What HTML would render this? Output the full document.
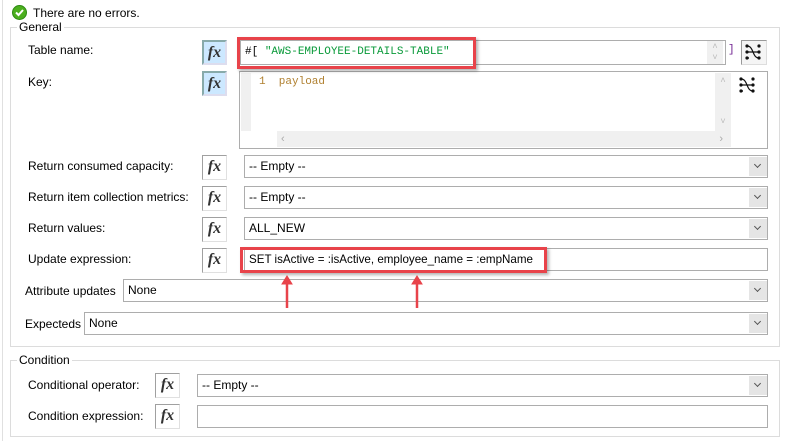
<!DOCTYPE html>
<html><head><style>
*{box-sizing:border-box;margin:0;padding:0}
body{width:785px;height:441px;background:#fff;font-family:"Liberation Sans",sans-serif;font-size:12px;color:#000;position:relative;overflow:hidden}
.a{position:absolute}
.lbl{position:absolute;font-size:12px;line-height:14px}
.fx{position:absolute;width:25px;height:25px;border:1px solid #a0a0a0;border-right-color:#e0e0e0;border-bottom-color:#e0e0e0;background:#fff;font-family:"Liberation Serif",serif;font-style:italic;font-weight:bold;font-size:16px;text-align:center;line-height:22px;color:#333}
.fx.b{background:#cce8ff;border:2px solid #8aa;border-right-color:#dde;border-bottom-color:#dde}
.sel{position:absolute;height:23px;border:1px solid #adadad;background:#fff;font-size:12px;line-height:21px;padding-left:4px}
.sel .arr{position:absolute;right:0;top:1px;width:18px;height:19px;background:#e5e5e5}
.sel .arr:after{content:"";position:absolute;left:6px;top:5px;width:4px;height:4px;border-right:1px solid #555;border-bottom:1px solid #555;transform:rotate(45deg)}
.fs{position:absolute;border:1px solid #dcdcdc}
.leg{position:absolute;background:#fff;padding:0 2px;font-size:12px;line-height:14px}
.red{position:absolute;border:3px solid #e8434a;box-shadow:2px 2px 3px rgba(0,0,0,.3);z-index:5}
.mono{font-family:"Liberation Mono",monospace;font-size:11px}
</style></head><body>
<div class="a" style="left:2px;top:0;width:1px;height:441px;background:#e0e0e0"></div>
<svg class="a" style="left:12px;top:5px" width="15" height="15"><circle cx="7.5" cy="7.5" r="7" fill="#4caf1e" stroke="#2d8a12"/><path d="M4 7.5l2.5 2.5 4.5-5" stroke="#fff" stroke-width="2" fill="none"/></svg>
<div class="lbl" style="left:33px;top:6px">There are no errors.</div>

<div class="fs" style="left:10px;top:27px;width:770px;height:320px"></div>
<div class="leg" style="left:17px;top:20px">General</div>

<div class="lbl" style="left:28px;top:43px">Table name:</div>
<div class="fx b" style="left:202px;top:40px">fx</div>
<div class="a" style="left:240px;top:40px;width:486px;height:25px;border:1px solid #adadad"></div>
<div class="a" style="left:707px;top:41px;width:16px;height:23px;background:#f0f0f0;color:#bbb;font-size:9px;text-align:center;line-height:11px">˄<br>˅</div>
<div class="a mono" style="left:245px;top:45px;line-height:14px"><span style="color:#000">#[</span> <span style="color:#0a9a3a">"AWS-EMPLOYEE-DETAILS-TABLE"</span></div>
<div class="a mono" style="left:728px;top:44px;color:#702090">]</div>
<div class="red" style="left:237px;top:37px;width:239px;height:32px"></div>
<div class="a" style="left:741px;top:40px;width:26px;height:25px;border:1px solid #999;border-right-color:#ddd;border-bottom-color:#ddd;background:#f5f5f5"></div>
<svg class="a" style="left:744px;top:43px" width="20" height="20"><g fill="#111"><circle cx="3" cy="3" r="1.6"/><circle cx="3" cy="9" r="1.6"/><circle cx="3" cy="15" r="1.6"/><circle cx="15" cy="3" r="1.6"/><circle cx="15" cy="9" r="1.6"/><circle cx="15" cy="15" r="1.6"/></g><path d="M3 3C10 3 8 15 15 15M3 15h2M3 9h12" stroke="#111" stroke-width="1.2" fill="none"/></svg>

<div class="lbl" style="left:28px;top:75px">Key:</div>
<div class="fx b" style="left:202px;top:71px">fx</div>
<div class="a" style="left:239px;top:71px;width:529px;height:78px;border:1px solid #adadad"></div>
<div class="a" style="left:241px;top:73px;width:10px;height:58px;background:#f0f0f0"></div>
<div class="a mono" style="left:259px;top:76px;color:#b08030">1&nbsp;&nbsp;payload</div>
<div class="a" style="left:715px;top:73px;width:16px;height:58px;background:#f0f0f0;color:#bbb;font-size:9px;text-align:center"><div style="margin-top:2px">˄</div><div style="margin-top:31px">˅</div></div>
<div class="a" style="left:277px;top:131px;width:454px;height:16px;background:#f0f0f0;color:#aaa;font-size:11px;line-height:16px;padding-left:4px">‹<span style="position:absolute;right:8px">›</span></div>
<svg class="a" style="left:738px;top:76px" width="20" height="20"><g fill="#111"><circle cx="3" cy="3" r="1.6"/><circle cx="3" cy="9" r="1.6"/><circle cx="3" cy="15" r="1.6"/><circle cx="15" cy="3" r="1.6"/><circle cx="15" cy="9" r="1.6"/><circle cx="15" cy="15" r="1.6"/></g><path d="M3 3C10 3 8 15 15 15M3 15h2M3 9h12" stroke="#111" stroke-width="1.2" fill="none"/></svg>

<div class="lbl" style="left:28px;top:159px">Return consumed capacity:</div>
<div class="fx" style="left:202px;top:155px">fx</div>
<div class="sel" style="left:244px;top:155px;width:524px">-- Empty --<div class="arr"></div></div>

<div class="lbl" style="left:28px;top:190px">Return item collection metrics:</div>
<div class="fx" style="left:202px;top:186px">fx</div>
<div class="sel" style="left:244px;top:186px;width:524px">-- Empty --<div class="arr"></div></div>

<div class="lbl" style="left:28px;top:221px">Return values:</div>
<div class="fx" style="left:202px;top:217px">fx</div>
<div class="sel" style="left:244px;top:217px;width:524px">ALL_NEW<div class="arr"></div></div>

<div class="lbl" style="left:28px;top:252px">Update expression:</div>
<div class="fx" style="left:202px;top:248px">fx</div>
<div class="sel" style="left:244px;top:248px;width:524px;font-size:11.6px">SET isActive = :isActive, employee_name = :empName</div>
<div class="red" style="left:240px;top:247px;width:307px;height:26px"></div>
<svg class="a" style="left:280px;top:274px;z-index:6" width="150" height="38"><g stroke="#e8434a" stroke-width="2.5" fill="#e8434a"><path d="M7 34V8M137 34V8"/><path d="M2 10L7 2L12 10Z M132 10L137 2L142 10Z" stroke-width="1"/></g></svg>

<div class="lbl" style="left:25px;top:284px">Attribute updates</div>
<div class="sel" style="left:123px;top:279px;width:645px">None<div class="arr"></div></div>

<div class="lbl" style="left:25px;top:317px">Expecteds</div>
<div class="sel" style="left:84px;top:312px;width:684px">None<div class="arr"></div></div>

<div class="fs" style="left:10px;top:360px;width:770px;height:77px"></div>
<div class="leg" style="left:17px;top:353px">Condition</div>

<div class="lbl" style="left:28px;top:378px">Conditional operator:</div>
<div class="fx" style="left:155px;top:373px">fx</div>
<div class="sel" style="left:197px;top:374px;width:571px">-- Empty --<div class="arr"></div></div>

<div class="lbl" style="left:28px;top:409px">Condition expression:</div>
<div class="fx" style="left:155px;top:404px">fx</div>
<div class="sel" style="left:197px;top:405px;width:571px"></div>
</body></html>
